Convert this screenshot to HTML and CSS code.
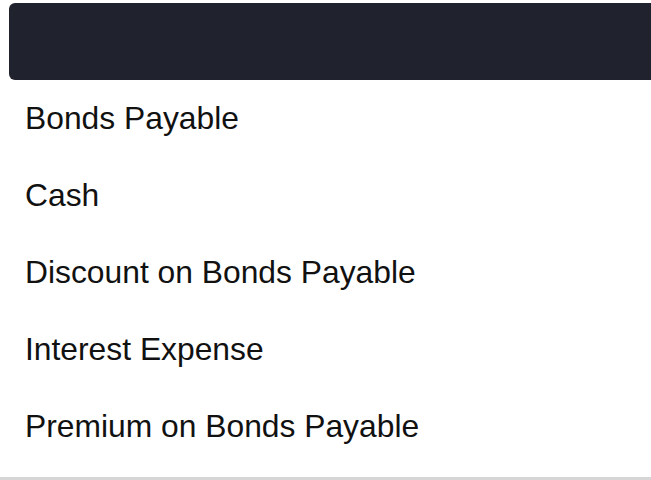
FILE: index.html
```html
<!DOCTYPE html>
<html>
<head>
<meta charset="utf-8">
<link rel="stylesheet" href="styles.css">
</head>
<body>
<div class="panel">
  <div class="header"></div>
  <ul class="options">
    <li class="option">Bonds Payable</li>
    <li class="option">Cash</li>
    <li class="option">Discount on Bonds Payable</li>
    <li class="option">Interest Expense</li>
    <li class="option">Premium on Bonds Payable</li>
  </ul>
  <div class="rule"></div>
</div>
</body>
</html>
```
FILE: styles.css
```css
html, body {
  margin: 0;
  padding: 0;
  background: #ffffff;
  overflow: hidden;
}
.panel {
  width: 651px;
  height: 480px;
  display: flex;
  flex-direction: column;
  font-family: "Liberation Sans", Arial, sans-serif;
}
.header {
  margin: 3px 0 0 9px;
  height: 77px;
  width: 660px;
  background: #20232e;
  border-radius: 6px;
  flex: none;
}
.options {
  list-style: none;
  margin: 0;
  padding: 0;
  flex: 1;
}
.option {
  height: 77px;
  display: flex;
  align-items: center;
  padding-left: 25px;
  font-size: 31.8px;
  color: #111111;
}
.rule {
  height: 3px;
  background: #d6d6d6;
  flex: none;
}
```
